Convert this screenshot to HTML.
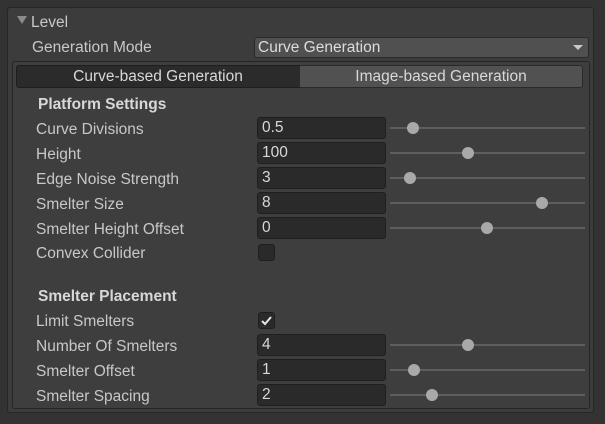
<!DOCTYPE html>
<html><head><style>
*{margin:0;padding:0;box-sizing:border-box}
body{width:605px;height:424px;background:#333;font-family:"Liberation Sans",sans-serif;color:#c8c8c8;font-size:15.5px;position:relative;overflow:hidden}
.abs{position:absolute}
.panel{left:7px;top:7px;width:587px;height:406px;background:#3c3c3c;border:1px solid #262626;border-radius:3px}
.inner{left:12px;top:61px;width:578px;height:348px;border:1px solid #252525;border-radius:3px;background:#3e3e3e}
.lbl{position:absolute;left:36px;font-size:15.5px;line-height:17px}
.b{font-weight:bold;color:#d8d8d8;left:38px}
.field{position:absolute;left:257px;width:129px;height:22px;background:#2a2a2a;border:1px solid #1f1f1f;border-radius:3px;padding-left:4px;line-height:20px;color:#d8d8d8}
.track{position:absolute;left:390px;width:195px;height:2px;background:#5e5e5e}
.knob{position:absolute;width:12px;height:12px;border-radius:50%;background:#a9a9a9}
.cb{position:absolute;left:258px;width:17px;height:17px;background:#2a2a2a;border:1px solid #1f1f1f;border-radius:3px}
</style></head><body>
<div class="abs panel"></div>
<div class="abs" style="left:17px;top:16px;width:0;height:0;border-left:5px solid transparent;border-right:5px solid transparent;border-top:8px solid #8a8a8a"></div>
<div class="abs" style="left:31px;top:14px;line-height:17px">Level</div>
<div class="abs" style="left:32px;top:39px;line-height:17px">Generation Mode</div>
<div class="abs" style="left:254px;top:37px;width:335px;height:21px;background:#505050;border:1px solid #2a2a2a;border-radius:3px;padding-left:3px;line-height:19px;color:#dcdcdc">Curve Generation</div>
<div class="abs" style="left:573px;top:45px;width:0;height:0;border-left:5px solid transparent;border-right:5px solid transparent;border-top:5px solid #c8c8c8"></div>
<div class="abs inner"></div>
<div class="abs" style="left:16px;top:65px;width:284px;height:23px;background:#2b2b2b;border:1px solid #1e1e1e;border-radius:3px 0 0 3px;text-align:center;line-height:21px;color:#d8d8d8">Curve-based Generation</div>
<div class="abs" style="left:299px;top:65px;width:284px;height:23px;background:#515151;border:1px solid #2a2a2a;border-radius:0 3px 3px 0;text-align:center;line-height:21px;color:#d8d8d8">Image-based Generation</div>
<div class="lbl b" style="top:96px">Platform Settings</div>

<div class="lbl" style="top:121px">Curve Divisions</div>
<div class="field" style="top:117px">0.5</div><div class="track" style="top:127px"></div><div class="knob" style="left:407px;top:122px"></div>
<div class="lbl" style="top:146px">Height</div>
<div class="field" style="top:142px">100</div><div class="track" style="top:152px"></div><div class="knob" style="left:462px;top:147px"></div>
<div class="lbl" style="top:171px">Edge Noise Strength</div>
<div class="field" style="top:167px">3</div><div class="track" style="top:177px"></div><div class="knob" style="left:404px;top:172px"></div>
<div class="lbl" style="top:196px">Smelter Size</div>
<div class="field" style="top:192px">8</div><div class="track" style="top:202px"></div><div class="knob" style="left:536px;top:197px"></div>
<div class="lbl" style="top:221px">Smelter Height Offset</div>
<div class="field" style="top:217px">0</div><div class="track" style="top:227px"></div><div class="knob" style="left:481px;top:222px"></div>
<div class="lbl" style="top:245px">Convex Collider</div>
<div class="cb" style="top:244px"></div>

<div class="lbl b" style="top:288px">Smelter Placement</div>
<div class="lbl" style="top:313px">Limit Smelters</div>
<div class="cb" style="top:312px"><svg width="15" height="15" viewBox="0 0 15 15" style="position:absolute;left:0;top:0"><path d="M3 8 L6 11 L12 4" stroke="#e6e6e6" stroke-width="2" fill="none"/></svg></div>
<div class="lbl" style="top:338px">Number Of Smelters</div>
<div class="field" style="top:334px">4</div><div class="track" style="top:344px"></div><div class="knob" style="left:462px;top:339px"></div>
<div class="lbl" style="top:363px">Smelter Offset</div>
<div class="field" style="top:359px">1</div><div class="track" style="top:369px"></div><div class="knob" style="left:408px;top:364px"></div>
<div class="lbl" style="top:388px">Smelter Spacing</div>
<div class="field" style="top:384px">2</div><div class="track" style="top:394px"></div><div class="knob" style="left:426px;top:389px"></div>
</body></html>
